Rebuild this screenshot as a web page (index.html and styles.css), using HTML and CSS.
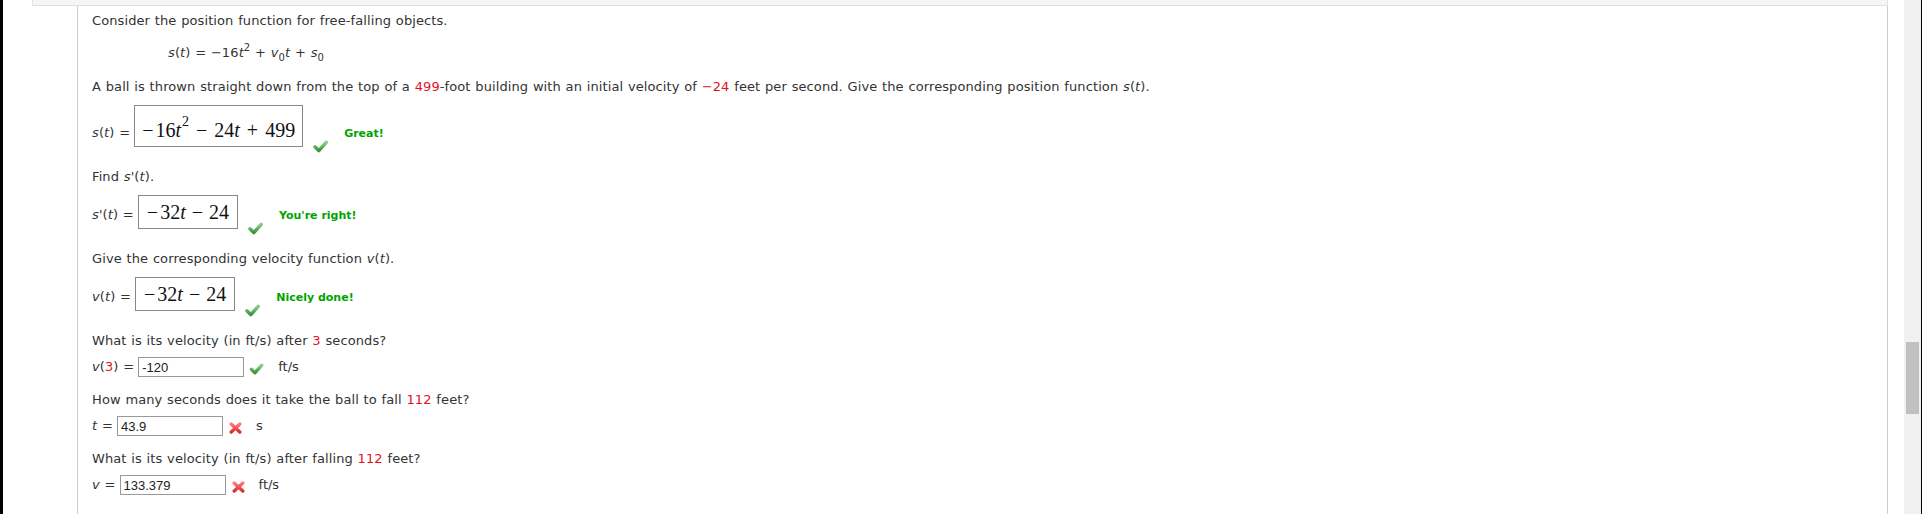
FILE: index.html
```html
<!DOCTYPE html>
<html lang="en">
<head>
<meta charset="utf-8">
<title>Position function</title>
<link rel="stylesheet" href="styles.css">
</head>
<body>
<svg class="defs" width="0" height="0" aria-hidden="true">
  <defs>
    <linearGradient id="gOk" x1="0" y1="0" x2="0" y2="1">
      <stop offset="0" stop-color="#8ccf8c"/>
      <stop offset="1" stop-color="#3e933e"/>
    </linearGradient>
    <linearGradient id="gBad" x1="0" y1="0" x2="0" y2="1">
      <stop offset="0" stop-color="#ff7b7b"/>
      <stop offset="1" stop-color="#d92f2f"/>
    </linearGradient>
  </defs>
</svg>
<div class="page">
  <div class="edge-l"></div>
  <div class="main">
    <div class="topbar"></div>
    <div class="panel">
      <p class="line intro">Consider the position function for free-falling objects.</p>
      <p class="line formula"><i>s</i>(<i>t</i>) = −16<i>t</i><span class="sup">2</span> + <i>v</i><span class="sub">0</span><i>t</i> + <i>s</i><span class="sub">0</span></p>
      <p class="line q after-formula">A ball is thrown straight down from the top of a <span class="red">499</span>-foot building with an initial velocity of <span class="red">−24</span> feet per second. Give the corresponding position function <i>s</i>(<i>t</i>).</p>

      <div class="row answer">
        <span class="label"><i>s</i>(<i>t</i>) =</span>
        <span class="box tall"><span class="neg">−</span>16<i>t</i><span class="msup">2</span><span class="op">−</span>24<i>t</i><span class="op">+</span>499</span>
        <svg class="ok" width="15" height="13" viewBox="0 0 15 13"><path d="M2 6.8 L5.8 10.6 L13.2 2.4" fill="none" stroke="url(#gOk)" stroke-width="3.6" stroke-linecap="round" stroke-linejoin="round"/></svg>
        <span class="fb">Great!</span>
      </div>

      <p class="line q after-answer">Find <i>s</i>'(<i>t</i>).</p>
      <div class="row answer">
        <span class="label"><i>s</i>'(<i>t</i>) =</span>
        <span class="box"><span class="neg">−</span>32<i>t</i><span class="op">−</span>24</span>
        <svg class="ok" width="15" height="13" viewBox="0 0 15 13"><path d="M2 6.8 L5.8 10.6 L13.2 2.4" fill="none" stroke="url(#gOk)" stroke-width="3.6" stroke-linecap="round" stroke-linejoin="round"/></svg>
        <span class="fb">You're right!</span>
      </div>

      <p class="line q after-answer">Give the corresponding velocity function <i>v</i>(<i>t</i>).</p>
      <div class="row answer">
        <span class="label"><i>v</i>(<i>t</i>) =</span>
        <span class="box"><span class="neg">−</span>32<i>t</i><span class="op">−</span>24</span>
        <svg class="ok" width="15" height="13" viewBox="0 0 15 13"><path d="M2 6.8 L5.8 10.6 L13.2 2.4" fill="none" stroke="url(#gOk)" stroke-width="3.6" stroke-linecap="round" stroke-linejoin="round"/></svg>
        <span class="fb">Nicely done!</span>
      </div>

      <p class="line q after-answer">What is its velocity (in ft/s) after <span class="red">3</span> seconds?</p>
      <div class="row entry">
        <span class="label"><i>v</i>(<span class="red">3</span>) =</span>
        <input class="field" type="text" value="-120" readonly>
        <svg class="ok small" width="15" height="12" viewBox="0 0 15 13"><path d="M2 6.8 L5.8 10.6 L13.2 2.4" fill="none" stroke="url(#gOk)" stroke-width="3.6" stroke-linecap="round" stroke-linejoin="round"/></svg>
        <span class="unit">ft/s</span>
      </div>

      <p class="line q after-entry">How many seconds does it take the ball to fall <span class="red">112</span> feet?</p>
      <div class="row entry">
        <span class="label"><i>t</i> =</span>
        <input class="field" type="text" value="43.9" readonly>
        <svg class="bad" width="13" height="12" viewBox="0 0 13 12"><path d="M2.2 2 L10.8 10 M10.8 2 L2.2 10" fill="none" stroke="url(#gBad)" stroke-width="3.4" stroke-linecap="round"/></svg>
        <span class="unit">s</span>
      </div>

      <p class="line q after-entry">What is its velocity (in ft/s) after falling <span class="red">112</span> feet?</p>
      <div class="row entry">
        <span class="label"><i>v</i> =</span>
        <input class="field" type="text" value="133.379" readonly>
        <svg class="bad" width="13" height="12" viewBox="0 0 13 12"><path d="M2.2 2 L10.8 10 M10.8 2 L2.2 10" fill="none" stroke="url(#gBad)" stroke-width="3.4" stroke-linecap="round"/></svg>
        <span class="unit">ft/s</span>
      </div>
    </div>
  </div>
  <div class="scroll"><div class="thumb"></div></div>
  <div class="edge-r"></div>
</div>
</body>
</html>
```
FILE: styles.css
```css
* { box-sizing: border-box; }
html, body { margin: 0; padding: 0; }
body {
  width: 1922px;
  height: 514px;
  overflow: hidden;
  background: #fff;
  font-family: "DejaVu Sans", Verdana, sans-serif;
  font-size: 13px;
  color: #333;
}
.defs { display: block; width: 0; height: 0; overflow: hidden; }
.page { display: flex; height: 514px; }
.edge-l { width: 3px; background: #000; flex: none; }
.edge-r { width: 1px; background: #000; flex: none; }
.main {
  flex: 1;
  display: flex;
  flex-direction: column;
  padding: 0 16px 0 29px;
}
.topbar {
  flex: none;
  height: 6px;
  background: #f5f5f5;
  border: 1px solid #e1e1e1;
  border-top: 0;
}
.panel {
  flex: 1;
  margin-left: 45px;
  border-left: 1px solid #cdcdcd;
  border-right: 1px solid #cdcdcd;
  padding: 7px 0 0 14px;
  display: flex;
  flex-direction: column;
  align-items: flex-start;
}
.line {
  margin: 0;
  line-height: 16px;
  white-space: nowrap;
  letter-spacing: 0.1px;
  word-spacing: 0.5px;
}
.formula { margin-top: 16px; padding-left: 76px; }
.q { margin-top: 16px; }
.q.after-formula { margin-top: 18px; }
.q.after-answer { margin-top: 22px; }
.q.after-entry { margin-top: 15px; }
.sup { font-size: 10px; line-height: 0; vertical-align: 6px; }
.sub { font-size: 10px; line-height: 0; vertical-align: -4px; }
.red { color: #e3121f; }

.row { display: flex; white-space: nowrap; }
.row.answer { margin-top: 10px; align-items: baseline; }
.row.entry { margin-top: 8px; align-items: center; }
.label { margin-right: 4px; line-height: 16px; letter-spacing: 0.1px; word-spacing: 0.5px; }

.box {
  border: 1px solid #888;
  padding: 6px 8px;
  font-family: "Liberation Serif", "Times New Roman", serif;
  font-size: 20px;
  line-height: 20px;
  color: #111;
}
.box.tall { padding-top: 14px; padding-left: 7px; padding-right: 7px; }
.box .neg { padding-right: 2px; }
.box .op { margin: 0 6px; }
.box.tall .op { margin: 0 7px; }
.box .msup { font-size: 14px; line-height: 0; vertical-align: 11px; margin-left: 1px; }

.ok { align-self: flex-end; margin: 0 0 -6px 10px; flex: none; }
.fb { margin-left: 16px; font-size: 11px; font-weight: bold; color: #00a400; }

.field {
  width: 106px;
  height: 20px;
  margin: 0;
  border: 1px solid #999;
  padding: 0 3px;
  font-family: "Liberation Sans", Arial, sans-serif;
  font-size: 13px;
  color: #222;
  background: #fff;
  outline: none;
}
.row.entry .ok.small { align-self: center; margin: 3px 0 0 5px; }
.bad { flex: none; margin: 3px 0 0 6px; }
.unit { margin-left: 14px; line-height: 16px; }

.scroll {
  flex: none;
  width: 17px;
  background: #f1f1f1;
  padding-top: 342px;
  display: flex;
  flex-direction: column;
}
.thumb { height: 72px; margin: 0 2px; background: #c1c1c1; }
```
